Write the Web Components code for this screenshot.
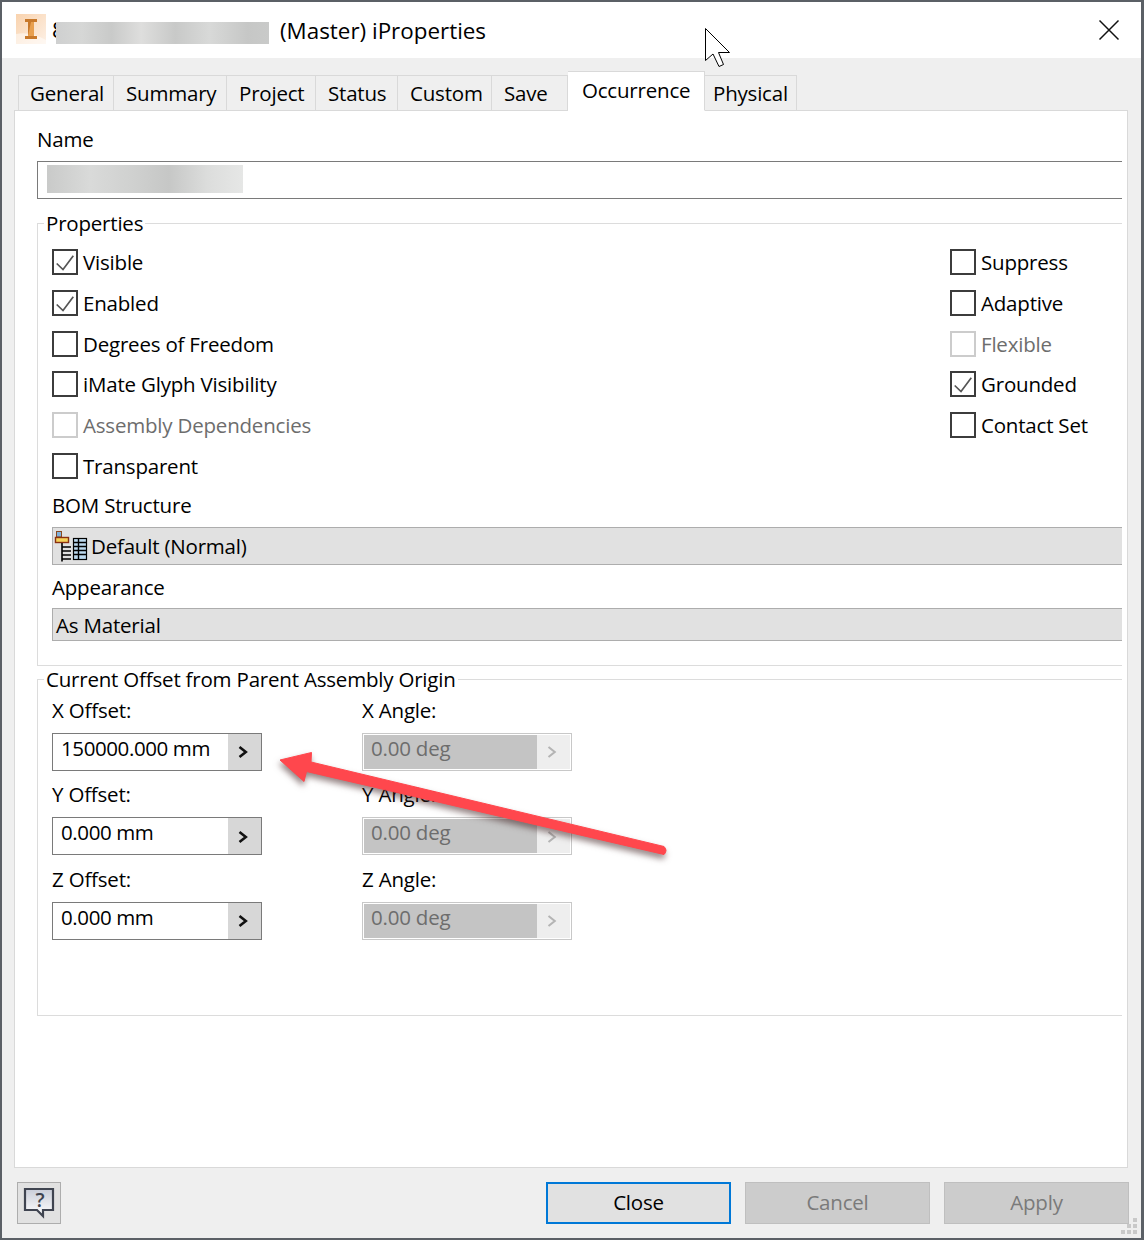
<!DOCTYPE html>
<html>
<head>
<meta charset="utf-8">
<title>iProperties</title>
<style>
  html, body { margin: 0; padding: 0; background: #5b6066; }
  body { font: 20.5px/22px "Open Sans", "Noto Sans", sans-serif; letter-spacing: -0.2px; color: #000; }
</style>
</head>
<body>

<ip-window>
  <ip-titlebar slot="title" label="(Master) iProperties"></ip-titlebar>

  <ip-tabs slot="tabs">
    <ip-tab w="96">General</ip-tab>
    <ip-tab w="113">Summary</ip-tab>
    <ip-tab w="89">Project</ip-tab>
    <ip-tab w="82">Status</ip-tab>
    <ip-tab w="94">Custom</ip-tab>
    <ip-tab w="76">Save</ip-tab>
    <ip-tab w="137" active>Occurrence</ip-tab>
    <ip-tab w="92">Physical</ip-tab>
  </ip-tabs>

  <ip-occurrence slot="panel"></ip-occurrence>

  <ip-footer slot="footer"></ip-footer>
</ip-window>

<script>
class IpWindow extends HTMLElement {
  constructor() {
    super();
    this.attachShadow({ mode: 'open' }).innerHTML = `
      <style>
        * { box-sizing: border-box; }
        :host {
          display: flex;
          flex-direction: column;
          position: relative;
          box-sizing: border-box;
          width: 1144px;
          height: 1240px;
          overflow: hidden;
          background: #efefef;
          border: solid #5b6066;
          border-width: 2px 3px 2px 2px;
        }
        .cursor { position: absolute; left: 698px; top: 20px; }
        .arrow { position: absolute; left: 0; top: 0; filter: drop-shadow(-1px 4px 3px rgba(60,30,30,.55)); }
        .grip { position: absolute; right: 2px; bottom: 2px; }
      </style>
      <slot name="title"></slot>
      <slot name="tabs"></slot>
      <slot name="panel"></slot>
      <slot name="footer"></slot>
      <svg class="arrow" width="1144" height="1240" viewBox="2 2 1144 1240">
        <path d="M280 760 L311.5 752.5 L311 762 L664 846.5 Q668 850.5 664 854.5 L306.5 771.5 L304 781.5 Z" fill="#ff474d" stroke="#ff474d" stroke-width="1" stroke-linejoin="round"/>
      </svg>
      <svg class="cursor" width="34" height="50" viewBox="700 22 34 50">
        <path d="M705.5 28.5 V60.5 L713 54 L719 66.5 L723.5 64.5 L718.5 52.5 H729.5 Z" fill="#fff" stroke="#000" stroke-width="1"/>
      </svg>
      <svg class="grip" width="18" height="18" viewBox="0 0 18 18" fill="#c9c9c9">
        <rect x="12" y="0" width="4" height="4"/>
        <rect x="6" y="6" width="4" height="4"/><rect x="12" y="6" width="4" height="4"/>
        <rect x="0" y="12" width="4" height="4"/><rect x="6" y="12" width="4" height="4"/><rect x="12" y="12" width="4" height="4"/>
      </svg>
    `;
  }
}

class IpTitlebar extends HTMLElement {
  constructor() {
    super();
    this.attachShadow({ mode: 'open' }).innerHTML = `
      <style>
        :host {
          display: flex;
          flex: none;
          align-items: center;
          box-sizing: border-box;
          height: 56px;
          padding-left: 14px;
          padding-right: 21px;
          background: #fff;
          font-size: 22.4px;
          letter-spacing: 0;
        }
        .icon { flex: none; margin: -2px 6px 0 0; }
        .blur {
          flex: none;
          position: relative;
          width: 213px;
          height: 22px;
          margin: 6px 11px 0 calc(4px - 1ch);
          background: linear-gradient(90deg, #cfd0d0, #d6d7d6 12%, #c9cac9 26%, #dededd 40%, #c8c9c8 56%, #d8d9d8 72%, #c6c7c6 90%, #c9cac9);
        }
        .label { flex: 1; margin-top: 2px; }
        .close { flex: none; }
      </style>
      <svg class="icon" width="30" height="30" viewBox="0 0 30 30">
        <defs>
          <linearGradient id="bg" x1="0" y1="0" x2="1" y2="1">
            <stop offset="0" stop-color="#f9d3ae"/><stop offset="1" stop-color="#fdf1e6"/>
          </linearGradient>
        </defs>
        <rect width="30" height="30" fill="url(#bg)"/>
        <path d="M0 20 Q14 17 30 26 V30 H0 Z" fill="#fff" opacity=".5"/>
        <path d="M9 5 H21 V8 H18 V22 H21 V25 H9 V22 H12 V8 H9 Z" fill="#c8792b"/>
        <path d="M15 8 H18 V22 H12 Z" fill="#e8a050"/>
      </svg>
      <span>8</span>
      <span class="blur"></span>
      <span class="label"></span>
      <svg class="close" width="22" height="22" viewBox="0 0 22 22">
        <path d="M1.5 1.5 L20.5 20.5 M20.5 1.5 L1.5 20.5" stroke="#111" stroke-width="1.5" fill="none"/>
      </svg>
    `;
    this.shadowRoot.querySelector('.label').textContent = this.getAttribute('label');
  }
}

class IpTabs extends HTMLElement {
  constructor() {
    super();
    this.attachShadow({ mode: 'open' }).innerHTML = `
      <style>
        :host {
          display: flex;
          flex: none;
          align-items: flex-end;
          box-sizing: border-box;
          height: 53px;
          padding-left: 16px;
          margin-bottom: -1px;
          position: relative;
          z-index: 1;
        }
      </style>
      <slot></slot>
    `;
  }
}

class IpTab extends HTMLElement {
  constructor() {
    super();
    this.attachShadow({ mode: 'open' }).innerHTML = `
      <style>
        :host {
          display: flex;
          align-items: center;
          box-sizing: border-box;
          height: 36px;
          padding-left: 12px;
          background: #efefef;
          border: 1px solid #d9d9d9;
          border-left-width: 0;
        }
        :host(:first-child) { border-left-width: 1px; padding-left: 11px; }
        :host(:last-child) { padding-left: 8px; }
        :host([active]) {
          height: 40px;
          padding-left: 14px;
          padding-bottom: 3px;
          background: #fff;
          border-bottom-color: #fff;
        }
      </style>
      <slot></slot>
    `;
    this.style.width = this.getAttribute('w') + 'px';
  }
}

class IpGroup extends HTMLElement {
  constructor() {
    super();
    this.attachShadow({ mode: 'open' }).innerHTML = `
      <style>
        * { box-sizing: border-box; }
        :host { display: block; }
        fieldset {
          margin: 0;
          padding: 0 0 0 14px;
          border: 1px solid #dcdcdc;
          border-right: 0;
          min-width: 0;
          height: var(--h);
        }
        legend {
          margin-left: -8px;
          padding: 0 2px;
          line-height: 26px;
        }
      </style>
      <fieldset>
        <legend></legend>
        <slot></slot>
      </fieldset>
    `;
    this.shadowRoot.querySelector('legend').textContent = this.getAttribute('label');
    this.style.setProperty('--h', this.getAttribute('h') + 'px');
  }
}

class IpCheck extends HTMLElement {
  constructor() {
    super();
    this.attachShadow({ mode: 'open' }).innerHTML = `
      <style>
        * { box-sizing: border-box; }
        :host {
          display: flex;
          align-items: center;
          height: 40.8px;
          gap: 5px;
        }
        .box {
          flex: none;
          width: 26px;
          height: 26px;
          border: 2px solid #3c3c3c;
          background: #fff;
        }
        :host([disabled]) .box { border-color: #cccccc; }
        :host([disabled]) { color: #6d6d6d; }
        svg { display: block; }
        path { display: none; }
        :host([checked]) path { display: block; }
      </style>
      <div class="box">
        <svg width="22" height="22" viewBox="2 2 22 22">
          <path d="M4.7 14.5 L11 20.5 L21.3 6.8" fill="none" stroke="#555" stroke-width="1.7"/>
        </svg>
      </div>
      <slot></slot>
    `;
  }
}

class IpCombo extends HTMLElement {
  constructor() {
    super();
    this.attachShadow({ mode: 'open' }).innerHTML = `
      <style>
        :host {
          display: flex;
          align-items: center;
          box-sizing: border-box;
          background: #e1e1e1;
          border: 1px solid #adadad;
          border-right: 0;
          padding-left: 3px;
        }
      </style>
      <slot></slot>
    `;
  }
}

class IpSpin extends HTMLElement {
  constructor() {
    super();
    this.attachShadow({ mode: 'open' }).innerHTML = `
      <style>
        * { box-sizing: border-box; }
        :host { display: block; width: 210px; }
        .label { height: 22px; margin-bottom: 12px; }
        .field {
          display: flex;
          height: 38px;
          border: 1px solid #7a7a7a;
          background: #fff;
        }
        .value { flex: 1; padding: 2px 0 0 8px; line-height: 24px; letter-spacing: -0.4px; }
        .btn {
          flex: none;
          width: 33px;
          display: flex;
          align-items: center;
          justify-content: center;
          background: #d7d7d7;
        }
        svg { margin-right: 4px; margin-top: 1px; }
        path { stroke: #111; stroke-width: 2.6; }
        :host([disabled]) .field { border-color: #c8c8c8; padding: 1px; }
        :host([disabled]) .value { background: #c4c4c4; color: #6d6d6d; padding: 1px 0 0 7px; letter-spacing: -0.2px; }
        :host([disabled]) .btn { background: #eeeeee; }
        :host([disabled]) path { stroke: #b4b4b4; stroke-width: 2; }
      </style>
      <div class="label"></div>
      <div class="field">
        <div class="value"></div>
        <div class="btn">
          <svg width="12" height="14" viewBox="0 0 12 14"><path d="M2.5 2 L8.8 7 L2.5 12" fill="none"/></svg>
        </div>
      </div>
    `;
    this.shadowRoot.querySelector('.label').textContent = this.getAttribute('label');
    this.shadowRoot.querySelector('.value').textContent = this.getAttribute('value');
  }
}

class IpButton extends HTMLElement {
  constructor() {
    super();
    this.attachShadow({ mode: 'open' }).innerHTML = `
      <style>
        :host {
          display: flex;
          align-items: center;
          justify-content: center;
          box-sizing: border-box;
          width: 185px;
          height: 42px;
          padding-bottom: 2px;
          background: #e1e1e1;
          border: 2px solid #0078d7;
        }
        :host([disabled]) {
          background: #cccccc;
          border: 1px solid #bfbfbf;
          color: #7a7a7a;
        }
      </style>
      <slot></slot>
    `;
  }
}

class IpFooter extends HTMLElement {
  constructor() {
    super();
    this.attachShadow({ mode: 'open' }).innerHTML = `
      <style>
        * { box-sizing: border-box; }
        :host {
          display: flex;
          flex: none;
          gap: 14px;
          padding: 14px 12px 0 15px;
        }
        .help {
          width: 44px;
          height: 42px;
          margin-right: auto;
          background: #e1e1e1;
          border: 1px solid #adadad;
          display: flex;
          align-items: center;
          justify-content: center;
        }
      </style>
      <div class="help">
        <svg width="34" height="34" viewBox="0 0 34 34">
          <defs>
            <linearGradient id="q" x1="0" y1="0" x2="0" y2="1">
              <stop offset="0" stop-color="#c9cdd8"/><stop offset="1" stop-color="#ffffff"/>
            </linearGradient>
          </defs>
          <path d="M3 3 H31 V24 H21 V30 L15 24 H3 Z" fill="url(#q)" stroke="#3f4450" stroke-width="2.2"/>
          <text x="18" y="21" text-anchor="middle" font-family="Open Sans, sans-serif" font-size="20" font-weight="600" fill="#3f4450">?</text>
        </svg>
      </div>
      <ip-button>Close</ip-button>
      <ip-button disabled>Cancel</ip-button>
      <ip-button disabled>Apply</ip-button>
    `;
  }
}

class IpOccurrence extends HTMLElement {
  constructor() {
    super();
    this.attachShadow({ mode: 'open' }).innerHTML = `
      <style>
        * { box-sizing: border-box; }
        :host {
          display: block;
          flex: none;
          box-sizing: border-box;
          height: 1058px;
          margin: 0 13px 0 12px;
          padding: 17px 5px 0 22px;
          background: #fff;
          border: 1px solid #d9d9d9;
        }
        .lbl { height: 22px; }
        .name {
          height: 38px;
          margin: 11px 0 11px;
          border: 1px solid #7a7a7a;
          border-right: 0;
          padding: 3px 0 0 9px;
        }
        .name i {
          display: block;
          width: 196px;
          height: 28px;
          background: linear-gradient(90deg, #c9cac9, #d9dad9 22%, #cfd0cf 45%, #c6c7c6 62%, #dcdddc 82%, #e6e7e6);
        }
        .checks {
          display: flex;
          justify-content: space-between;
          padding-top: 5.6px;
          height: 258px;
        }
        .col2 { width: 172px; }
        .bom { height: 38px; margin: 11px 0 11px; }
        .app { height: 33px; margin-top: 10px; }
        .offsets {
          display: grid;
          grid-template-columns: 310px 210px;
          row-gap: 12.5px;
          padding-top: 6.9px;
        }
        .bom svg { flex: none; margin: 0 3px 0 -2px; }
      </style>
      <div class="lbl">Name</div>
      <div class="name"><i></i></div>

      <ip-group label="Properties" h="456">
        <div class="checks">
          <div>
            <ip-check checked>Visible</ip-check>
            <ip-check checked>Enabled</ip-check>
            <ip-check>Degrees of Freedom</ip-check>
            <ip-check>iMate Glyph Visibility</ip-check>
            <ip-check disabled>Assembly Dependencies</ip-check>
            <ip-check>Transparent</ip-check>
          </div>
          <div class="col2">
            <ip-check>Suppress</ip-check>
            <ip-check>Adaptive</ip-check>
            <ip-check disabled>Flexible</ip-check>
            <ip-check checked>Grounded</ip-check>
            <ip-check>Contact Set</ip-check>
          </div>
        </div>
        <div class="lbl">BOM Structure</div>
        <ip-combo class="bom">
          <svg width="34" height="34" viewBox="0 0 34 34">
            <rect x="2.5" y="2.5" width="5" height="5.5" fill="#7fb0dc" stroke="#8a4a20"/>
            <rect x="1.5" y="8.5" width="13" height="5" fill="#f6d35a" stroke="#8a3010" stroke-width="1.4"/>
            <path d="M8 14 V32.5 M8 18 H17 M8 22 H17 M8 26 H17 M8 30 H17" stroke="#000" stroke-width="1.6" fill="none"/>
            <rect x="19.5" y="9.5" width="13" height="21" fill="#bcd9ee" stroke="#000" stroke-width="1.2"/>
            <path d="M19.5 13.5 H32.5 M19.5 17.5 H32.5 M19.5 21.5 H32.5 M19.5 25.5 H32.5 M24.5 9.5 V30.5" stroke="#000" stroke-width="1.4" fill="none"/>
          </svg>
          Default (Normal)
        </ip-combo>
        <div class="lbl">Appearance</div>
        <ip-combo class="app">As Material</ip-combo>
      </ip-group>

      <ip-group label="Current Offset from Parent Assembly Origin" h="350">
        <div class="offsets">
          <ip-spin label="X Offset:" value="150000.000 mm"></ip-spin>
          <ip-spin label="X Angle:" value="0.00 deg" disabled></ip-spin>
          <ip-spin label="Y Offset:" value="0.000 mm"></ip-spin>
          <ip-spin label="Y Angle:" value="0.00 deg" disabled></ip-spin>
          <ip-spin label="Z Offset:" value="0.000 mm"></ip-spin>
          <ip-spin label="Z Angle:" value="0.00 deg" disabled></ip-spin>
        </div>
      </ip-group>
    `;
  }
}

customElements.define('ip-window', IpWindow);
customElements.define('ip-titlebar', IpTitlebar);
customElements.define('ip-tabs', IpTabs);
customElements.define('ip-tab', IpTab);
customElements.define('ip-group', IpGroup);
customElements.define('ip-check', IpCheck);
customElements.define('ip-combo', IpCombo);
customElements.define('ip-spin', IpSpin);
customElements.define('ip-button', IpButton);
customElements.define('ip-footer', IpFooter);
customElements.define('ip-occurrence', IpOccurrence);
</script>
</body>
</html>
